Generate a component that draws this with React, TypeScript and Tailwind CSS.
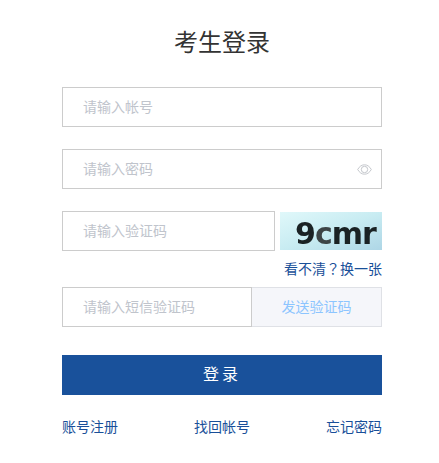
export default function App() {
  const font = "font-['Noto_Sans_CJK_SC','Liberation_Sans',sans-serif]";
  const ph = "text-sm leading-[20px] text-[#c0c4cc] -translate-y-px";
  return (
    <div className={`w-[439px] h-[463px] bg-white pl-[62px] pr-[57px] ${font}`}>
      <h1 className="pt-[23px] h-[87px] text-center text-2xl leading-[36px] text-[#333333] font-normal">考生登录</h1>
      <div className="h-10 border border-[#cccccc] flex items-center pl-5">
        <span className={ph}>请输入帐号</span>
      </div>
      <div className="mt-[22px] h-10 border border-[#cccccc] flex items-center justify-between pl-5 pr-[9px]">
        <span className={ph}>请输入密码</span>
        <svg width="15" height="11" viewBox="0 0 15 11" fill="none" stroke="#c4c7cc" strokeWidth="1">
          <path d="M0.7 5.5C2.5 2.3 4.8 0.8 7.5 0.8S12.5 2.3 14.3 5.5C12.5 8.7 10.2 10.2 7.5 10.2S2.5 8.7 0.7 5.5Z" />
          <circle cx="7.5" cy="5.5" r="3.2" />
        </svg>
      </div>
      <div className="mt-[22px] flex items-center justify-between">
        <div className="w-[213px] h-10 border border-[#cccccc] flex items-center pl-5">
          <span className={ph}>请输入验证码</span>
        </div>
        <div className="w-[102px] h-[38px] bg-gradient-to-br from-[#e0f8fa] via-[#c8ecf2] to-[#aed6e6] flex items-center pl-[15px] overflow-hidden">
          <span className="font-['DejaVu_Sans',sans-serif] font-bold text-[30px] leading-none tracking-[-1px] text-[#1a2224] blur-[0.6px] translate-y-[3px]">
            9<span className="text-[#3c4446]">c</span>mr
          </span>
        </div>
      </div>
      <div className="h-[36px] pt-[7px] text-right text-sm leading-[20px] text-[#194f99]">
        看不清<span className="font-['Noto_Sans_CJK_TC',sans-serif]">？</span>换一张
      </div>
      <div className="h-10 flex">
        <div className="flex-1 border border-[#cccccc] flex items-center pl-5">
          <span className={ph}>请输入短信验证码</span>
        </div>
        <div className="w-[130px] border border-l-0 border-[#dfe1e6] bg-[#f5f6fa] flex items-center justify-center text-sm leading-[20px] text-[#8cc5ff]">
          <span className="-translate-y-px">发送验证码</span>
        </div>
      </div>
      <button className="mt-7 w-full h-10 bg-[#19519b] text-white text-base tracking-[3px] flex items-center justify-center">
        <span className="-translate-y-[2px]">登录</span>
      </button>
      <div className="mt-[21px] flex justify-between text-sm leading-[20px] text-[#194f99]">
        <span>账号注册</span>
        <span>找回帐号</span>
        <span>忘记密码</span>
      </div>
    </div>
  );
}
